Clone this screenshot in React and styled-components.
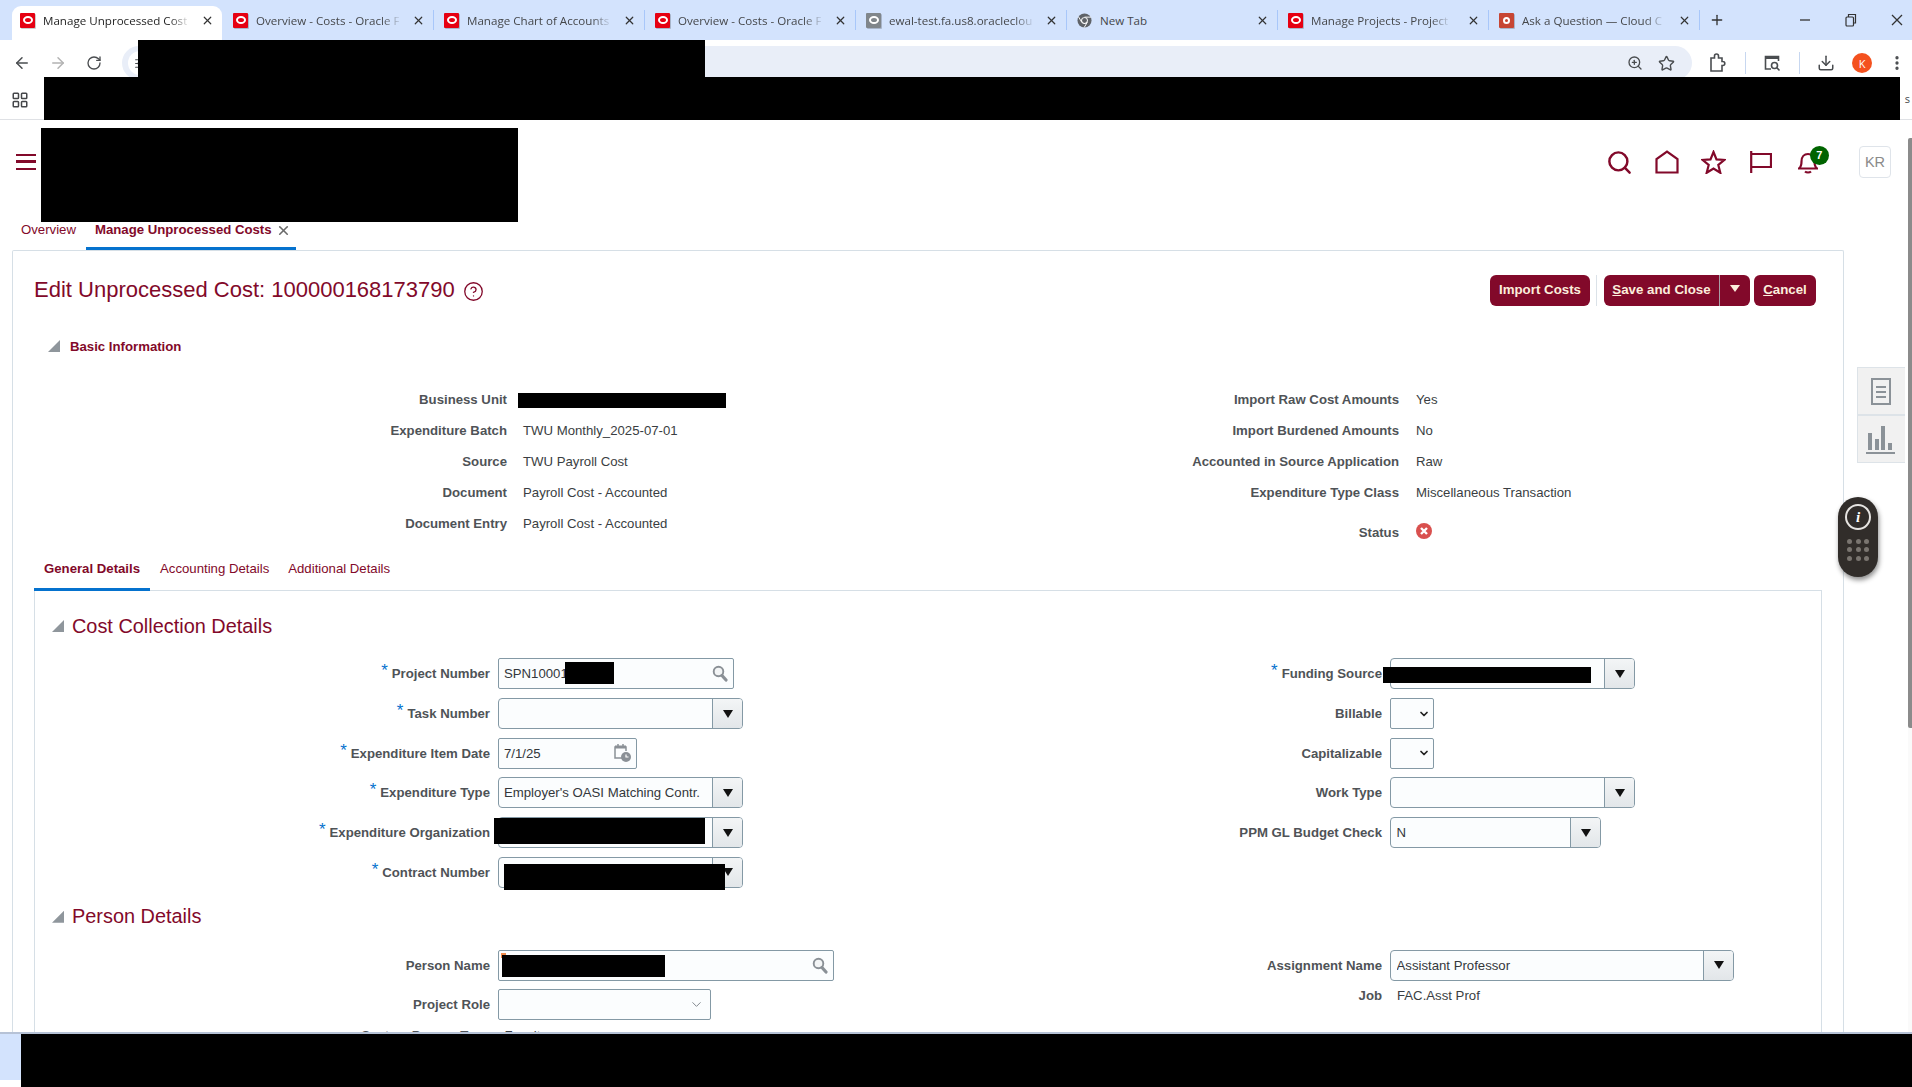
import styled, { createGlobalStyle } from 'styled-components';
import {
  ArrowLeft,
  ArrowRight,
  RotateCw,
  ZoomIn,
  Star,
  MoreVertical,
  Download,
  X,
  Plus,
  Search,
  CircleHelp,
  ChevronDown,
  LayoutGrid,
  SlidersHorizontal,
} from 'lucide-react';

const MAROON = '#82092a';

const browserTabs = [
  { title: 'Manage Unprocessed Cost', active: true },
  { title: 'Overview - Costs - Oracle F' },
  { title: 'Manage Chart of Accounts' },
  { title: 'Overview - Costs - Oracle F' },
  { title: 'ewal-test.fa.us8.oracleclou', color: '#80868b' },
  { title: 'New Tab', chrome: true, plain: true },
  { title: 'Manage Projects - Project' },
  { title: 'Ask a Question — Cloud C', color: '#c74634', small: true },
];

const GlobalStyle = createGlobalStyle`
  html, body {
    margin: 0;
    padding: 0;
    background: #fff;
    font-family: "Liberation Sans", Arial, sans-serif;
  }
  * {
    box-sizing: border-box;
  }
`;

const Page = styled.div`
  position: relative;
  width: 1912px;
  height: 1087px;
  display: flex;
  flex-direction: column;
  overflow: hidden;
  background: #fff;
`;

const Redact = styled.div`
  position: absolute;
  left: ${(p) => p.$x}px;
  top: ${(p) => p.$y}px;
  width: ${(p) => p.$w}px;
  height: ${(p) => p.$h}px;
  background: #000;
  z-index: 5;
`;

/* browser chrome */
const TabStrip = styled.div`
  height: 40px;
  flex: none;
  display: flex;
  align-items: flex-end;
  padding-left: 12px;
  background: #d3e3fd;
  overflow: hidden;
`;

const TabItem = styled.div`
  width: 210px;
  height: 34px;
  flex: none;
  display: flex;
  align-items: center;
  gap: 8px;
  padding: 0 8px 6px ${(p) => (p.$active ? 8 : 10)}px;
  background: ${(p) => (p.$active ? '#fff' : 'transparent')};
  border-radius: 9px 9px 0 0;
`;

const TabTitle = styled.span`
  white-space: nowrap;
  font: 11.6px "Open Sans", sans-serif;
  color: ${(p) => (p.$active ? '#1f1f1f' : '#45474a')};
  mask-image: ${(p) =>
    p.$plain ? 'none' : 'linear-gradient(to right, #000 88%, rgba(0, 0, 0, 0.15))'};
`;

const TabClose = styled.span`
  margin-left: auto;
  display: flex;
  color: #333;
`;

const TabSep = styled.div`
  width: 1px;
  height: 20px;
  margin: 0 0 10px 0;
  flex: none;
  background: ${(p) => (p.$hidden ? 'transparent' : '#a8c7fa')};
`;

const FaviconBox = styled.span`
  width: 15px;
  height: 15px;
  flex: none;
  display: flex;
  align-items: center;
  justify-content: center;
  background: ${(p) => p.$color || '#e60012'};
  border-radius: 1px;
  box-shadow: 1px 1px 0 rgba(0, 0, 0, 0.2);
`;

const FaviconRing = styled.span`
  width: ${(p) => (p.$small ? 7 : 10)}px;
  height: ${(p) => (p.$small ? 7 : 8)}px;
  border: 2px solid #fff;
  border-radius: 50%;
`;

const PlusBtn = styled.div`
  width: 34px;
  height: 34px;
  flex: none;
  display: flex;
  align-items: center;
  justify-content: center;
  padding-bottom: 6px;
  color: #333;
`;

const WindowControls = styled.div`
  margin-left: auto;
  margin-right: -8px;
  height: 40px;
  display: flex;
`;

const WindowBtn = styled.div`
  width: 46px;
  height: 40px;
  display: flex;
  align-items: center;
  justify-content: center;
`;

const Toolbar = styled.div`
  height: 46px;
  flex: none;
  display: flex;
  align-items: center;
  padding-left: 4px;
  background: #fff;
  overflow: hidden;
`;

const ToolBtn = styled.div`
  width: ${(p) => p.$w || 36}px;
  height: 34px;
  margin-left: ${(p) => p.$ml || 0}px;
  flex: none;
  display: flex;
  align-items: center;
  justify-content: center;
  color: ${(p) => (p.$dim ? '#b3b3b3' : '#4a4d50')};
`;

const Omnibox = styled.div`
  width: 1570px;
  height: 34px;
  margin-left: 10px;
  flex: none;
  display: flex;
  align-items: center;
  padding: 0 10px 0 6px;
  background: #e9eef8;
  border-radius: 17px;
  color: #4a4d50;
`;

const OmniLeft = styled.div`
  width: 24px;
  height: 24px;
  display: flex;
  align-items: center;
  justify-content: center;
  background: #fff;
  border-radius: 50%;
`;

const OmniRight = styled.div`
  margin-left: auto;
  display: flex;
  align-items: center;
  gap: 15px;
  padding-right: 7px;
`;

const ToolSep = styled.div`
  width: 1px;
  height: 22px;
  margin-left: ${(p) => p.$ml}px;
  flex: none;
  background: #c7d7f0;
`;

const Avatar = styled.div`
  width: 20px;
  height: 20px;
  flex: none;
  border-radius: 50%;
  background: #f4511e;
  color: #fff;
  font: 11px "Open Sans", sans-serif;
  display: flex;
  align-items: center;
  justify-content: center;
`;

const BookmarkBar = styled.div`
  height: 34px;
  flex: none;
  display: flex;
  align-items: flex-start;
  justify-content: space-between;
  padding: 5px 2px 0 11px;
  border-bottom: 1px solid #dfe1e5;
  color: #45474a;
  font: 11px "Open Sans", sans-serif;
`;

/* app header */
const AppHeader = styled.header`
  height: 84px;
  flex: none;
  display: flex;
  align-items: center;
  padding: 0 21px 0 16px;
`;

const Hamburger = styled.div`
  width: 20px;
  height: 16px;
  border-top: 2.5px solid ${MAROON};
  border-bottom: 2.5px solid ${MAROON};
  position: relative;
  &::after {
    content: '';
    position: absolute;
    left: 0;
    right: 0;
    top: 4.25px;
    height: 2.5px;
    background: ${MAROON};
  }
`;

const HeaderIcons = styled.div`
  margin-left: auto;
  display: flex;
  align-items: center;
`;

const HeaderIcon = styled.div`
  position: relative;
  width: 47.25px;
  height: 28px;
  display: flex;
  align-items: center;
  justify-content: center;
  color: ${MAROON};
`;

const Badge = styled.span`
  position: absolute;
  left: 25px;
  top: -2.5px;
  width: 19px;
  height: 19px;
  border-radius: 50%;
  background: #006400;
  color: #fff;
  font: bold 11px "Liberation Sans", Arial, sans-serif;
  display: flex;
  align-items: center;
  justify-content: center;
`;

const UserBox = styled.div`
  width: 32px;
  height: 32px;
  margin-left: 27px;
  border: 1px solid #dfe4ea;
  border-radius: 4px;
  color: #8a8a8a;
  font-size: 14.5px;
  display: flex;
  align-items: center;
  justify-content: center;
`;

const NavTabs = styled.nav`
  height: 46px;
  flex: none;
  display: flex;
  padding-left: 21px;
`;

const NavTab = styled.div`
  height: 46px;
  margin-right: ${(p) => (p.$active ? 0 : 10)}px;
  padding: 17.5px ${(p) => (p.$active ? 5 : 0)}px 0 ${(p) => (p.$active ? 9 : 0)}px;
  width: ${(p) => (p.$active ? '210px' : 'auto')};
  display: flex;
  align-items: flex-start;
  justify-content: space-between;
  font-size: 13.2px;
  line-height: 16px;
  font-weight: ${(p) => (p.$active ? 700 : 400)};
  color: ${MAROON};
  border-bottom: ${(p) => (p.$active ? '3px solid #0572ce' : '0')};
`;

const NavClose = styled.span`
  color: #6b6b6b;
  margin-top: 1px;
  display: flex;
`;

/* page body */
const Body = styled.div`
  flex: 1;
  min-height: 0;
  display: flex;
  overflow: hidden;
`;

const Panel = styled.main`
  width: 1832px;
  margin-left: 12px;
  flex: none;
  display: flex;
  flex-direction: column;
  border: 1px solid #d6dfe6;
  border-bottom: 0;
  border-radius: 2px 2px 0 0;
`;

const SideRail = styled.aside`
  width: 48px;
  height: 96px;
  margin: 117px 0 0 13px;
  padding-right: 2px;
  flex: none;
  display: flex;
  flex-direction: column;
  background: #f1f1f1;
  border: 1px solid #dde3e8;
  border-right: 0;
`;

const RailItem = styled.div`
  flex: 1;
  display: flex;
  align-items: center;
  justify-content: center;
  & + & {
    border-top: 2px solid #dde3e8;
    margin-right: -2px;
    padding-right: 2px;
  }
`;

const Scrollbar = styled.div`
  width: 4px;
  margin-left: 3px;
  flex: none;
  background: #fafafa;
`;

const ScrollThumb = styled.div`
  position: absolute;
  left: 1908px;
  top: 138px;
  width: 4px;
  height: 590px;
  background: #8b8b8b;
  border-radius: 2px 0 0 2px;
`;

const TitleRow = styled.div`
  height: 31px;
  margin-top: 24px;
  flex: none;
  display: flex;
  align-items: center;
  padding: 0 27px 0 21px;
`;

const PageTitle = styled.h1`
  margin: 0 0 2px;
  font-size: 22px;
  line-height: 28px;
  font-weight: 400;
  color: ${MAROON};
`;

const HelpIcon = styled.span`
  display: flex;
  margin-left: 8px;
  margin-top: 1px;
  color: ${MAROON};
`;

const ButtonBar = styled.div`
  margin-left: auto;
  display: flex;
  align-items: stretch;
  height: 31px;
`;

const Button = styled.button`
  width: ${(p) => p.$w}px;
  height: 31px;
  padding: 0 0 2px;
  margin-left: ${(p) => p.$ml || 0}px;
  display: flex;
  align-items: center;
  justify-content: center;
  border: 0;
  border-radius: 6px;
  background: ${MAROON};
  color: #fbeedc;
  font: bold 13.3px "Liberation Sans", Arial, sans-serif;
`;

const BarSep = styled.div`
  width: 1px;
  margin: 0 7px 0 6px;
  background: #dbe2e8;
`;

const SplitArrow = styled.span`
  width: 31px;
  height: 31px;
  margin-bottom: -2px;
  display: flex;
  align-items: center;
  justify-content: center;
  border-left: 1px solid #a9a0a8;
  &::after {
    content: '';
    border-left: 5px solid transparent;
    border-right: 5px solid transparent;
    border-top: 7px solid #fbeedc;
    margin-top: -4px;
  }
`;

const SplitLabel = styled.span`
  flex: 1;
  text-align: center;
`;

const SectionHead = styled.div`
  height: ${(p) => (p.$large ? 24 : 18)}px;
  margin: ${(p) => p.$mt}px 0 0 0;
  padding-left: ${(p) => p.$indent}px;
  flex: none;
  display: flex;
  align-items: center;
  gap: ${(p) => (p.$large ? 8 : 10)}px;
  color: ${MAROON};
  font-size: ${(p) => (p.$large ? '19.9px' : '13.2px')};
  font-weight: ${(p) => (p.$large ? 400 : 700)};
`;

const Disclosure = styled.span`
  width: 12px;
  height: 12px;
  flex: none;
  background: #8f969c;
  clip-path: polygon(100% 0, 100% 100%, 0 100%);
`;

const BasicGrid = styled.div`
  margin-top: 29px;
  flex: none;
  display: grid;
  grid-template-columns: 900px 1fr;
`;

const Column = styled.div`
  display: flex;
  flex-direction: column;
`;

const ReadRow = styled.div`
  height: ${(p) => p.$h || 31}px;
  display: flex;
  align-items: center;
`;

const Label = styled.label`
  width: ${(p) => p.$w}px;
  flex: none;
  text-align: right;
  white-space: nowrap;
  font-size: 13.2px;
  font-weight: 700;
  color: #4f5357;
`;

const Required = styled.span`
  color: #0572ce;
  font-size: 17px;
  line-height: 10px;
  font-weight: 400;
  margin-right: 4px;
  position: relative;
  top: -2px;
`;

const Value = styled.span`
  margin-left: ${(p) => p.$ml}px;
  font-size: 13.2px;
  color: #3a3e42;
  white-space: nowrap;
`;

const SubTabs = styled.div`
  height: 35px;
  margin: 0 21px;
  flex: none;
  display: flex;
  border-bottom: 1px solid #d6dfe6;
`;

const SubTab = styled.div`
  height: 35px;
  padding: 5px 9px 0 10px;
  min-width: ${(p) => (p.$active ? '116px' : 0)};
  font-size: 13.2px;
  line-height: 16px;
  font-weight: ${(p) => (p.$active ? 700 : 400)};
  color: ${MAROON};
  border-bottom: ${(p) => (p.$active ? '3px solid #0572ce' : '0')};
`;

const TabPanel = styled.div`
  flex: 1;
  min-height: 0;
  margin: 0 21px;
  display: flex;
  flex-direction: column;
  border-left: 1px solid #d6dfe6;
  border-right: 1px solid #d6dfe6;
`;

const FormGrid = styled.div`
  margin-top: ${(p) => p.$mt}px;
  flex: none;
  display: grid;
  grid-template-columns: 900px 1fr;
`;

const FieldRow = styled.div`
  height: ${(p) => p.$h || 39.7}px;
  display: flex;
  align-items: center;
  gap: ${(p) => p.$gap || 7.5}px;
`;

const Field = styled.div`
  width: ${(p) => p.$w}px;
  height: 31px;
  flex: none;
  display: flex;
  align-items: center;
  padding: 0 0 0 5.5px;
  border: 1px solid #8499a5;
  border-radius: ${(p) => (p.$round ? 4 : 2)}px;
  background: #fbfdfe;
  font-size: 13.2px;
  color: #33373b;
  white-space: nowrap;
  overflow: hidden;
`;

const FieldText = styled.span`
  flex: 1;
  min-width: 0;
  overflow: hidden;
`;

const FieldIcon = styled.span`
  width: ${(p) => p.$w || 26}px;
  height: 100%;
  flex: none;
  display: flex;
  align-items: center;
  justify-content: center;
  color: ${(p) => p.$color || '#8a9096'};
`;

const ComboBtn = styled.span`
  width: 30px;
  height: 100%;
  flex: none;
  display: flex;
  align-items: center;
  justify-content: center;
  background: linear-gradient(#f3f5f6, #e2e6e9);
  border-left: 1px solid #8499a5;
  &::after {
    content: '';
    border-left: 5px solid transparent;
    border-right: 5px solid transparent;
    border-top: 8px solid #111;
  }
`;

const PersonMark = styled.span`
  position: absolute;
  left: 501px;
  top: 953px;
  width: 5px;
  height: 5px;
  background: #f08a4b;
  z-index: 4;
`;

const Footer = styled.footer`
  height: 55px;
  flex: none;
  border-top: 2px solid #b6c2d6;
  background: linear-gradient(#d3e3fd 0, #d3e3fd 46px, #fff 46px);
`;

const AssistPill = styled.div`
  position: absolute;
  left: 1838px;
  top: 497px;
  width: 40px;
  height: 80px;
  padding-top: 7px;
  display: flex;
  flex-direction: column;
  align-items: center;
  background: #312d2a;
  border-radius: 20px;
  box-shadow: 1px 3px 5px rgba(0, 0, 0, 0.45);
  z-index: 6;
`;

const AssistInfo = styled.div`
  width: 26px;
  height: 26px;
  border: 2px solid #e6e4e1;
  border-radius: 50%;
  color: #fff;
  font: italic bold 15px "Liberation Serif", serif;
  display: flex;
  align-items: center;
  justify-content: center;
`;

const AssistDots = styled.div`
  margin-top: 9px;
  display: grid;
  grid-template-columns: repeat(3, 5px);
  gap: 3.3px;
  span {
    width: 5px;
    height: 5px;
    border-radius: 50%;
    background: #7a7570;
  }
`;

const Favicon = ({ tab }) => {
  if (tab.chrome) {
    return (
      <svg width="15" height="15" viewBox="0 0 16 16">
        <circle cx="8" cy="8" r="7.5" fill="#5f6368" />
        <circle cx="8" cy="8" r="3.6" fill="#fff" />
        <circle cx="8" cy="8" r="2.6" fill="#5f6368" />
        <path d="M8 4.4h7M5 9.8L1.6 4M11 9.8L7.6 15.6" stroke="#fff" strokeWidth="1" />
      </svg>
    );
  }
  return (
    <FaviconBox $color={tab.color}>
      <FaviconRing $small={tab.small} />
    </FaviconBox>
  );
};

const ExtensionIcon = () => (
  <svg width="18" height="20" viewBox="0 0 18 20" fill="none" stroke="#4a4d50" strokeWidth="1.6">
    <path d="M3 5h3.500V3a2 2 0 0 1 4 0v2H14v3.500h.8a2 2 0 0 1 0 4H14V18H3z" />
  </svg>
);

const TabSearchIcon = () => (
  <svg width="18" height="18" viewBox="0 0 18 18" fill="none" stroke="#4a4d50" strokeWidth="1.6">
    <path d="M8 15H2.500V2.500h13V7" />
    <path d="M2.500 3.500h13" strokeWidth="3" />
    <circle cx="11.500" cy="11.500" r="3" />
    <path d="M13.800 13.800L16.500 16.500" />
  </svg>
);

const MinimizeIcon = () => (
  <svg width="12" height="12" viewBox="0 0 12 12">
    <path d="M1 6h10" stroke="#333" strokeWidth="1.300" />
  </svg>
);

const RestoreIcon = () => (
  <svg width="12" height="14" viewBox="0 0 12 14" fill="none" stroke="#333" strokeWidth="1.200">
    <rect x="1" y="4" width="7.500" height="9" rx="1" />
    <path d="M3.500 4V1.500h7V10H8.500" />
  </svg>
);

const CloseWindowIcon = () => (
  <svg width="12" height="12" viewBox="0 0 12 12">
    <path d="M1 1l10 10M11 1L1 11" stroke="#333" strokeWidth="1.300" />
  </svg>
);

const HomeIcon = () => (
  <svg width="24" height="24" viewBox="0 0 24 24" fill="none" stroke="currentColor" strokeWidth="2.200">
    <path d="M1.500 22.500V9L12 1.500 22.500 9v13.500z" />
  </svg>
);

const StarIcon = () => (
  <svg width="25" height="24" viewBox="0 0 25 24" fill="none" stroke="currentColor" strokeWidth="2.200">
    <path d="M12.500 2l3 7.400 8 .5-6.200 5.100 2 7.800-6.800-4.300-6.800 4.300 2-7.800L1.500 9.900l8-.5z" />
  </svg>
);

const FlagIcon = () => (
  <svg width="22" height="24" viewBox="0 0 22 24" fill="none" stroke="currentColor" strokeWidth="2.200">
    <path d="M1.200 1v22M1.200 4H21v13H1.200" />
  </svg>
);

const BellIcon = () => (
  <svg width="20" height="24" viewBox="0 0 20 24" fill="none" stroke="currentColor" strokeWidth="2.200">
    <path d="M1 18.500c2-1.500 2.500-3.500 2.500-7 0-4.500 2.800-7.500 6.500-7.500s6.500 3 6.500 7.500c0 3.500.5 5.500 2.500 7z" />
    <path d="M7 21.500c1.500 1.300 4.500 1.300 6 0" />
  </svg>
);

const DocIcon = () => (
  <svg width="20" height="27" viewBox="0 0 20 27" fill="none" stroke="#8b9298" strokeWidth="2">
    <rect x="1" y="1" width="18" height="25" />
    <path d="M5 9h10M5 14h10M5 19h10" />
  </svg>
);

const ChartIcon = () => (
  <svg width="29" height="29" viewBox="0 0 29 29" fill="#8b9298">
    <rect x="2" y="8" width="4" height="17" />
    <rect x="9" y="14" width="4" height="11" />
    <rect x="15" y="1" width="4" height="24" />
    <rect x="22" y="18" width="4" height="7" />
    <rect x="0" y="27" width="29" height="2" />
  </svg>
);

const StatusError = () => (
  <svg width="16" height="16" viewBox="0 0 16 16">
    <circle cx="8" cy="8" r="8" fill="#d9504e" />
    <path d="M5 5l6 6M11 5l-6 6" stroke="#fff" strokeWidth="2.400" />
  </svg>
);

const CalendarIcon = () => (
  <svg width="19" height="20" viewBox="0 0 19 20" fill="none" stroke="#8a9096" strokeWidth="1.500">
    <path d="M9 15H2V4h11v4" />
    <path d="M2 4h11" strokeWidth="3" />
    <path d="M5 1v3M10 1v3" />
    <circle cx="13" cy="14" r="5" fill="#8a9096" stroke="none" />
    <path d="M13 11.500V14h2.500" stroke="#fff" strokeWidth="1.200" />
  </svg>
);

const LookupIcon = () => (
  <svg width="16" height="17" viewBox="0 0 16 17" fill="none">
    <circle cx="6.500" cy="6.500" r="4.800" fill="#f3f5f6" stroke="#8a9096" strokeWidth="1.900" />
    <path d="M10 10.500l4 4.500" stroke="#8a9096" strokeWidth="3.200" strokeLinecap="round" />
  </svg>
);

const App = () => {
  return (
    <Page>
      <GlobalStyle />

      <TabStrip>
        {browserTabs.map((tab, index) => (
          <div key={index} style={{ display: 'contents' }}>
            <TabItem $active={tab.active}>
              <Favicon tab={tab} />
              <TabTitle $active={tab.active} $plain={tab.plain}>
                {tab.title}
              </TabTitle>
              <TabClose>
                <X size={13} strokeWidth={2.2} />
              </TabClose>
            </TabItem>
            <TabSep $hidden={tab.active} />
          </div>
        ))}
        <PlusBtn>
          <Plus size={16} strokeWidth={2} />
        </PlusBtn>
        <WindowControls>
          <WindowBtn>
            <MinimizeIcon />
          </WindowBtn>
          <WindowBtn>
            <RestoreIcon />
          </WindowBtn>
          <WindowBtn>
            <CloseWindowIcon />
          </WindowBtn>
        </WindowControls>
      </TabStrip>

      <Toolbar>
        <ToolBtn>
          <ArrowLeft size={18} strokeWidth={2} />
        </ToolBtn>
        <ToolBtn $dim>
          <ArrowRight size={18} strokeWidth={2} />
        </ToolBtn>
        <ToolBtn>
          <RotateCw size={16} strokeWidth={2} />
        </ToolBtn>
        <Omnibox>
          <OmniLeft>
            <SlidersHorizontal size={13} strokeWidth={2} />
          </OmniLeft>
          <OmniRight>
            <ZoomIn size={16} strokeWidth={2} />
            <Star size={17} strokeWidth={2} />
          </OmniRight>
        </Omnibox>
        <ToolBtn $w={50}>
          <ExtensionIcon />
        </ToolBtn>
        <ToolSep $ml={3} />
        <ToolBtn $w={52}>
          <TabSearchIcon />
        </ToolBtn>
        <ToolSep $ml={1} />
        <ToolBtn $w={52}>
          <Download size={18} strokeWidth={2} />
        </ToolBtn>
        <Avatar>K</Avatar>
        <ToolBtn $w={30} $ml={10}>
          <MoreVertical size={18} strokeWidth={2.4} />
        </ToolBtn>
      </Toolbar>

      <BookmarkBar>
        <LayoutGrid size={18} strokeWidth={2} />
        <span>s</span>
      </BookmarkBar>

      <AppHeader>
        <Hamburger />
        <HeaderIcons>
          <HeaderIcon>
            <Search size={27} strokeWidth={2.2} />
          </HeaderIcon>
          <HeaderIcon>
            <HomeIcon />
          </HeaderIcon>
          <HeaderIcon>
            <StarIcon />
          </HeaderIcon>
          <HeaderIcon>
            <FlagIcon />
          </HeaderIcon>
          <HeaderIcon>
            <BellIcon />
            <Badge>7</Badge>
          </HeaderIcon>
        </HeaderIcons>
        <UserBox>KR</UserBox>
      </AppHeader>

      <NavTabs>
        <NavTab>Overview</NavTab>
        <NavTab $active>
          Manage Unprocessed Costs
          <NavClose>
            <X size={15} strokeWidth={2.6} />
          </NavClose>
        </NavTab>
      </NavTabs>

      <Body>
        <Panel>
          <TitleRow>
            <PageTitle>Edit Unprocessed Cost: 100000168173790</PageTitle>
            <HelpIcon>
              <CircleHelp size={21} strokeWidth={1.5} />
            </HelpIcon>
            <ButtonBar>
              <Button $w={100}>Import Costs</Button>
              <BarSep />
              <Button $w={146}>
                <SplitLabel>
                  <u>S</u>ave and Close
                </SplitLabel>
                <SplitArrow />
              </Button>
              <Button $w={62} $ml={4}>
                <span>
                  <u>C</u>ancel
                </span>
              </Button>
            </ButtonBar>
          </TitleRow>

          <SectionHead $mt={31} $indent={35}>
            <Disclosure />
            Basic Information
          </SectionHead>

          <BasicGrid>
            <Column>
              <ReadRow>
                <Label $w={494}>Business Unit</Label>
              </ReadRow>
              <ReadRow>
                <Label $w={494}>Expenditure Batch</Label>
                <Value $ml={16}>TWU Monthly_2025-07-01</Value>
              </ReadRow>
              <ReadRow>
                <Label $w={494}>Source</Label>
                <Value $ml={16}>TWU Payroll Cost</Value>
              </ReadRow>
              <ReadRow>
                <Label $w={494}>Document</Label>
                <Value $ml={16}>Payroll Cost - Accounted</Value>
              </ReadRow>
              <ReadRow>
                <Label $w={494}>Document Entry</Label>
                <Value $ml={16}>Payroll Cost - Accounted</Value>
              </ReadRow>
            </Column>
            <Column>
              <ReadRow>
                <Label $w={486}>Import Raw Cost Amounts</Label>
                <Value $ml={17}>Yes</Value>
              </ReadRow>
              <ReadRow>
                <Label $w={486}>Import Burdened Amounts</Label>
                <Value $ml={17}>No</Value>
              </ReadRow>
              <ReadRow>
                <Label $w={486}>Accounted in Source Application</Label>
                <Value $ml={17}>Raw</Value>
              </ReadRow>
              <ReadRow>
                <Label $w={486}>Expenditure Type Class</Label>
                <Value $ml={17}>Miscellaneous Transaction</Value>
              </ReadRow>
              <ReadRow $h={48}>
                <Label $w={486}>Status</Label>
                <Value $ml={17}>
                  <StatusError />
                </Value>
              </ReadRow>
            </Column>
          </BasicGrid>

          <SubTabs>
            <SubTab $active>General Details</SubTab>
            <SubTab>Accounting Details</SubTab>
            <SubTab>Additional Details</SubTab>
          </SubTabs>

          <TabPanel>
            <SectionHead $large $mt={23} $indent={17}>
              <Disclosure />
              Cost Collection Details
            </SectionHead>

            <FormGrid $mt={16}>
              <Column>
                <FieldRow>
                  <Label $w={455}>
                    <Required>*</Required>Project Number
                  </Label>
                  <Field $w={236}>
                    <FieldText>SPN10001</FieldText>
                    <FieldIcon>
                      <LookupIcon />
                    </FieldIcon>
                  </Field>
                </FieldRow>
                <FieldRow>
                  <Label $w={455}>
                    <Required>*</Required>Task Number
                  </Label>
                  <Field $w={245.5} $round>
                    <FieldText />
                    <ComboBtn />
                  </Field>
                </FieldRow>
                <FieldRow>
                  <Label $w={455}>
                    <Required>*</Required>Expenditure Item Date
                  </Label>
                  <Field $w={139}>
                    <FieldText>7/1/25</FieldText>
                    <FieldIcon>
                      <CalendarIcon />
                    </FieldIcon>
                  </Field>
                </FieldRow>
                <FieldRow>
                  <Label $w={455}>
                    <Required>*</Required>Expenditure Type
                  </Label>
                  <Field $w={245.5} $round>
                    <FieldText>Employer's OASI Matching Contr.</FieldText>
                    <ComboBtn />
                  </Field>
                </FieldRow>
                <FieldRow>
                  <Label $w={455}>
                    <Required>*</Required>Expenditure Organization
                  </Label>
                  <Field $w={245.5} $round>
                    <FieldText />
                    <ComboBtn />
                  </Field>
                </FieldRow>
                <FieldRow>
                  <Label $w={455}>
                    <Required>*</Required>Contract Number
                  </Label>
                  <Field $w={245.5} $round>
                    <FieldText />
                    <ComboBtn />
                  </Field>
                </FieldRow>
              </Column>
              <Column>
                <FieldRow $gap={8}>
                  <Label $w={447}>
                    <Required>*</Required>Funding Source
                  </Label>
                  <Field $w={245} $round>
                    <FieldText />
                    <ComboBtn />
                  </Field>
                </FieldRow>
                <FieldRow $gap={8}>
                  <Label $w={447}>Billable</Label>
                  <Field $w={44}>
                    <FieldText />
                    <FieldIcon $w={18} $color="#222">
                      <ChevronDown size={12} strokeWidth={3.5} />
                    </FieldIcon>
                  </Field>
                </FieldRow>
                <FieldRow $gap={8}>
                  <Label $w={447}>Capitalizable</Label>
                  <Field $w={44}>
                    <FieldText />
                    <FieldIcon $w={18} $color="#222">
                      <ChevronDown size={12} strokeWidth={3.5} />
                    </FieldIcon>
                  </Field>
                </FieldRow>
                <FieldRow $gap={8}>
                  <Label $w={447}>Work Type</Label>
                  <Field $w={245} $round>
                    <FieldText />
                    <ComboBtn />
                  </Field>
                </FieldRow>
                <FieldRow $gap={8}>
                  <Label $w={447}>PPM GL Budget Check</Label>
                  <Field $w={211} $round>
                    <FieldText>N</FieldText>
                    <ComboBtn />
                  </Field>
                </FieldRow>
              </Column>
            </FormGrid>

            <SectionHead $large $mt={12.7} $indent={17}>
              <Disclosure />
              Person Details
            </SectionHead>

            <FormGrid $mt={16.6}>
              <Column>
                <FieldRow>
                  <Label $w={455}>Person Name</Label>
                  <Field $w={336}>
                    <FieldText />
                    <FieldIcon>
                      <LookupIcon />
                    </FieldIcon>
                  </Field>
                </FieldRow>
                <FieldRow>
                  <Label $w={455}>Project Role</Label>
                  <Field $w={213}>
                    <FieldText />
                    <FieldIcon $color="#7b8188">
                      <ChevronDown size={15} strokeWidth={1.5} />
                    </FieldIcon>
                  </Field>
                </FieldRow>
                <FieldRow $h={21}>
                  <Label $w={455}>System Person Type</Label>
                  <Value $ml={7}>Faculty</Value>
                </FieldRow>
              </Column>
              <Column>
                <FieldRow $gap={8}>
                  <Label $w={447}>Assignment Name</Label>
                  <Field $w={344} $round>
                    <FieldText>Assistant Professor</FieldText>
                    <ComboBtn />
                  </Field>
                </FieldRow>
                <FieldRow $h={20} $gap={8}>
                  <Label $w={447}>Job</Label>
                  <Value $ml={7}>FAC.Asst Prof</Value>
                </FieldRow>
              </Column>
            </FormGrid>
          </TabPanel>
        </Panel>

        <SideRail>
          <RailItem>
            <DocIcon />
          </RailItem>
          <RailItem>
            <ChartIcon />
          </RailItem>
        </SideRail>
        <Scrollbar />
      </Body>

      <Footer />

      <ScrollThumb />
      <PersonMark />

      <AssistPill>
        <AssistInfo>i</AssistInfo>
        <AssistDots>
          {Array.from({ length: 9 }).map((_, i) => (
            <span key={i} />
          ))}
        </AssistDots>
      </AssistPill>

      {/* blacked-out areas of the original screenshot */}
      <Redact $x={138} $y={40} $w={567} $h={37} />
      <Redact $x={44} $y={77} $w={1856} $h={43} />
      <Redact $x={41} $y={128} $w={477} $h={94} />
      <Redact $x={518} $y={393} $w={208} $h={15} />
      <Redact $x={565} $y={662} $w={49} $h={22} />
      <Redact $x={494} $y={818} $w={211} $h={26} />
      <Redact $x={504} $y={864} $w={221} $h={26} />
      <Redact $x={1383} $y={667} $w={208} $h={16} />
      <Redact $x={502} $y={955} $w={163} $h={22} />
      <Redact $x={21} $y={1034} $w={1891} $h={53} />
    </Page>
  );
};

export default App;
